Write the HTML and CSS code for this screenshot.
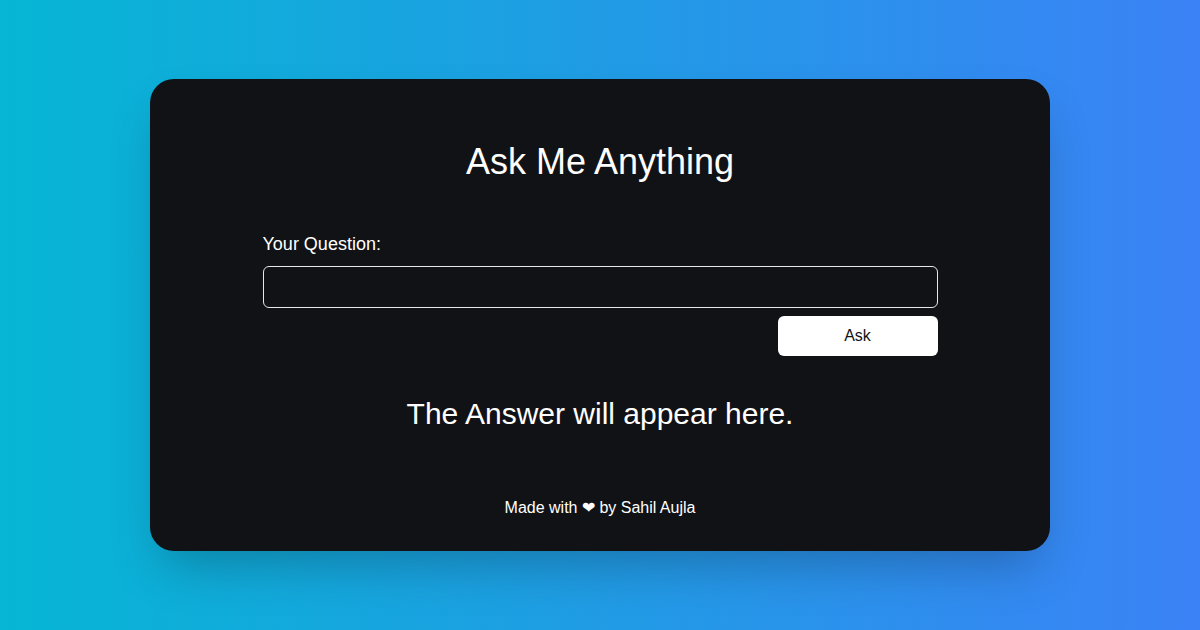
FILE: index.html
```html
<!DOCTYPE html>
<html lang="en">
<head>
    <meta charset="UTF-8">
    <meta name="viewport" content="width=device-width, initial-scale=1.0">
    <title>Ask Me Anything</title>
    <link rel="stylesheet" href="styles.css">
</head>
<body>
    <main class="card">
        <h1 class="title">Ask Me Anything</h1>
        <form class="ask-form">
            <label for="question">Your Question:</label>
            <input id="question" class="question" type="text" name="question">
            <button class="ask-btn" type="submit">Ask</button>
        </form>
        <p id="answer" class="answer">The Answer will appear here.</p>
        <footer class="footer">Made with ❤ by Sahil Aujla</footer>
    </main>
</body>
</html>
```
FILE: styles.css
```css
* {
    box-sizing: border-box;
}
body {
    margin: 0;
    min-height: 100vh;
    display: flex;
    justify-content: center;
    align-items: center;
    font-family: "Nimbus Sans", "Liberation Sans", Arial, sans-serif;
    font-size: 16px;
    line-height: 24px;
    color: #fff;
    background: linear-gradient(to right, #06b6d4, #3b82f6);
}
.card {
    width: 75%;
    padding: 63px 0 31px;
    display: flex;
    flex-direction: column;
    align-items: center;
    background-color: #111215;
    border-radius: 24px;
    box-shadow: 0 25px 50px -12px rgba(0, 0, 0, 0.25);
}
.title {
    margin: 0 0 48px;
    font-size: 36px;
    font-weight: 400;
    line-height: 40px;
    text-align: center;
}
.ask-form {
    width: 75%;
    display: flex;
    flex-direction: column;
    gap: 8px;
}
.ask-form label {
    font-size: 18px;
    line-height: 28px;
}
.question {
    width: 100%;
    padding: 8px;
    font: inherit;
    color: #fff;
    background-color: transparent;
    border: 1px solid #e5e7eb;
    border-radius: 6px;
}
.ask-btn {
    align-self: flex-end;
    width: 160px;
    padding: 8px 16px;
    font: inherit;
    color: #111215;
    background-color: #fff;
    border: none;
    border-radius: 6px;
    cursor: pointer;
}
.answer {
    margin: 40px 0 64px;
    font-size: 30px;
    line-height: 36px;
    text-align: center;
}
.footer {
    text-align: center;
}
```
